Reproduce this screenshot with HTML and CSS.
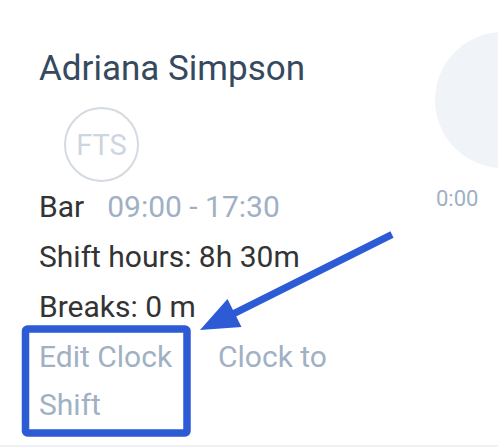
FILE: index.html
```html
<!DOCTYPE html>
<html>
<head>
<meta charset="utf-8">
<link rel="stylesheet" href="styles.css">
</head>
<body>
<div class="page">
  <div class="card">
    <div class="info">
      <div class="name">Adriana Simpson</div>
      <div class="avatar">FTS</div>
      <div class="row"><span class="role">Bar</span><span class="time">09:00 - 17:30</span></div>
      <div class="row">Shift hours: 8h 30m</div>
      <div class="row">Breaks: 0 m</div>
      <div class="actions">
        <a class="link first">Edit Clock Shift</a>
        <a class="link">Clock to</a>
      </div>
    </div>
    <div class="chart">
      <div class="dial"></div>
      <div class="legend"><span>0:00</span><span>T</span></div>
    </div>
  </div>
  <div class="divider"></div>
  <svg class="annot" width="498" height="448" viewBox="0 0 498 448">
    <rect x="25.5" y="329" width="161.5" height="104" rx="2" fill="none" stroke="#2c5bd5" stroke-width="7.5"/>
    <line x1="392" y1="234.5" x2="232" y2="314.5" stroke="#2c5bd5" stroke-width="7"/>
    <polygon points="200,330 227.5,299 241.5,327" fill="#2c5bd5"/>
  </svg>
</div>
</body>
</html>
```
FILE: styles.css
```css
html, body {
  margin: 0;
  padding: 0;
  background: #fff;
}
body {
  width: 498px;
  height: 448px;
  overflow: hidden;
  font-family: Roboto, "Liberation Sans", sans-serif;
}
.page {
  position: relative;
  width: 498px;
  height: 448px;
  overflow: hidden;
}
.card {
  display: flex;
  height: 445px;
}
.info {
  width: 435px;
  flex: none;
  padding-left: 39px;
  box-sizing: border-box;
  padding-top: 48px;
}
.name {
  font-size: 35px;
  line-height: 42px;
  color: #35495f;
  white-space: nowrap;
}
.avatar {
  margin-top: 17px;
  margin-left: 25px;
  width: 75px;
  height: 75px;
  box-sizing: border-box;
  border: 2px solid #d3dae2;
  border-radius: 50%;
  display: flex;
  align-items: center;
  justify-content: center;
  font-size: 29px;
  color: #cdd5de;
}
.row {
  font-size: 30px;
  line-height: 50px;
  color: #333;
  white-space: nowrap;
}
.time {
  color: #9fb0c4;
  margin-left: 23px;
}
.actions {
  display: flex;
  gap: 29px;
  font-size: 30px;
  line-height: 48px;
  margin-top: 1px;
}
.link {
  color: #a1b1c4;
}
.link.first {
  width: 150px;
}
.chart {
  flex: none;
  width: 140px;
  padding-top: 32px;
}
.dial {
  width: 136px;
  height: 136px;
  border-radius: 50%;
  background: #f0f3f8;
}
.legend {
  margin-top: 18px;
  display: flex;
  gap: 19px;
  font-size: 22px;
  line-height: 26px;
  color: #9fb0c4;
  white-space: nowrap;
  margin-left: 1px;
}
.divider {
  height: 2px;
  background: #eef2f7;
}
.annot {
  position: absolute;
  left: 0;
  top: 0;
}
```
